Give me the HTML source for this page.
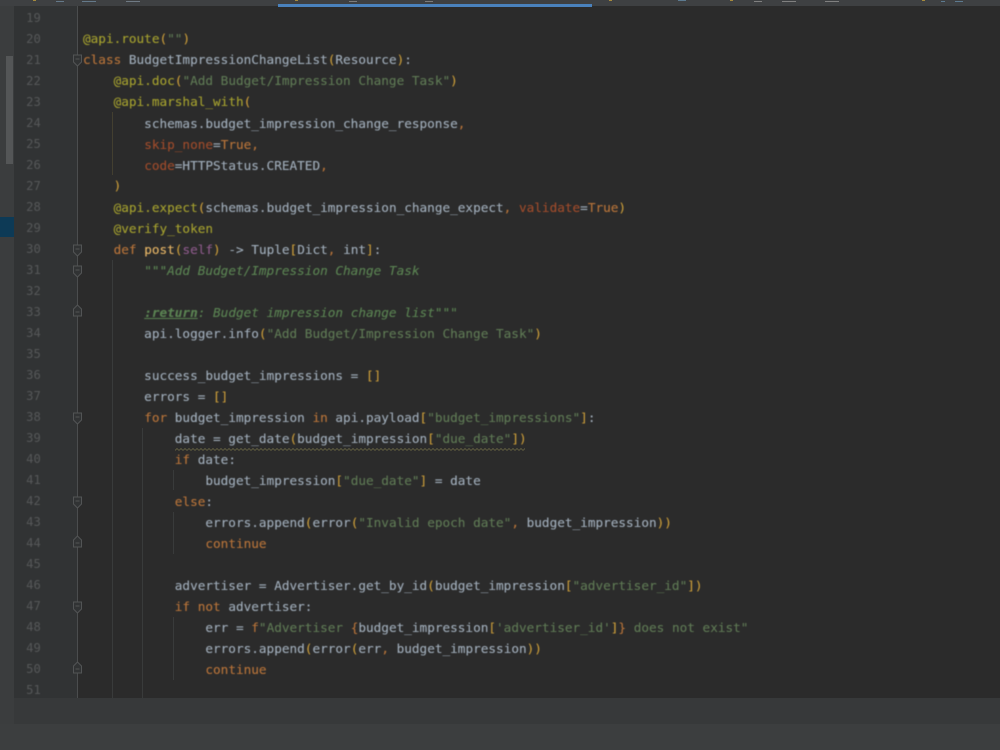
<!DOCTYPE html>
<html><head><meta charset="utf-8"><style>
html,body{margin:0;padding:0;width:1000px;height:750px;overflow:hidden;background:#2b2b2b}
div{position:absolute}
#code{left:0;top:0;width:1000px;height:750px;filter:blur(.45px)}
.l{white-space:pre;font:12.71px/21px "DejaVu Sans Mono","Liberation Mono",monospace;color:#a0adba;left:83px;height:21px;-webkit-text-stroke:.12px}
.u{margin-top:-1px}
.n{left:14px;width:39px;text-align:center;white-space:pre;font:12.2px/21px "DejaVu Sans Mono","Liberation Mono",monospace;color:#565859;height:21px}
.k{color:#b8743a}.s{color:#5f7a55}.d{color:#a5a12f}.b{color:#c99c3a}.p{color:#a04c2c}.c{color:#b8743a}.f{color:#e6b566}.m{color:#8c5a8a}.i{font-style:italic;color:#5b8453}
.g{background:#393b3b;width:1px}
svg{position:absolute}
</style></head><body>
<div style="left:0;top:0;width:14px;height:750px;background:#3b3d3e"></div>
<div style="left:6px;top:56px;width:7px;height:108px;background:#545657"></div>
<div style="left:0;top:217px;width:14px;height:20px;background:#0d3a56"></div>
<div style="left:14px;top:6px;width:64px;height:692px;background:#313334"></div>
<div style="left:0;top:0;width:1000px;height:6px;background:#3e4042"></div>
<div style="left:278px;top:4px;width:314px;height:3px;background:#4a82bd"></div>
<div style="left:14px;top:698px;width:986px;height:26px;background:#37393a"></div>
<div style="left:0;top:724px;width:1000px;height:26px;background:#3c3e3f"></div>
<div style="left:33px;top:0;height:1px;width:3px;background:#a58a3d"></div>
<div style="left:56px;top:1px;height:1px;width:8px;background:#64798a"></div>
<div style="left:82px;top:1px;height:1px;width:14px;background:#64798a"></div>
<div style="left:126px;top:1px;height:1px;width:14px;background:#6f7a84"></div>
<div style="left:295px;top:0;height:1px;width:3px;background:#a58a3d"></div>
<div style="left:349px;top:1px;height:1px;width:8px;background:#7c7c7c"></div>
<div style="left:425px;top:1px;height:1px;width:8px;background:#7c7c7c"></div>
<div style="left:609px;top:0;height:1px;width:3px;background:#a58a3d"></div>
<div style="left:678px;top:0;height:1px;width:8px;background:#5c7a90"></div>
<div style="left:730px;top:0;height:1px;width:3px;background:#a58a3d"></div>
<div style="left:754px;top:1px;height:1px;width:8px;background:#808080"></div>
<div style="left:782px;top:1px;height:1px;width:14px;background:#808080"></div>
<div style="left:825px;top:1px;height:1px;width:14px;background:#808080"></div>
<div style="left:922px;top:0;height:1px;width:3px;background:#a58a3d"></div>
<div style="left:941px;top:1px;height:1px;width:4px;background:#5c7a90"></div>
<div style="left:955px;top:1px;height:1px;width:8px;background:#5c7a90"></div>
<div class="g" style="left:77px;top:6px;height:692px;background:#4b4d4e"></div>
<div class="g" style="left:112px;top:112px;height:63px;background:#433f30"></div>
<div class="g" style="left:112px;top:260px;height:438px"></div>
<div class="g" style="left:142px;top:428px;height:270px"></div>
<div class="g" style="left:173px;top:470px;height:20px"></div>
<div class="g" style="left:173px;top:512px;height:42px"></div>
<div class="g" style="left:173px;top:617px;height:63px"></div>
<svg width="1000" height="750" style="left:0;top:0" fill="#313334" stroke="#525455" stroke-width="1">
<defs><pattern id="w" width="4" height="3" patternUnits="userSpaceOnUse" x="175" y="448"><path d="M0 2.5L2 .5L4 2.5" fill="none" stroke="#6f6b45" stroke-width=".7"/></pattern></defs>
<rect x="175" y="448" width="350" height="3" fill="url(#w)" stroke="none"/>
<path d="M73.5 55h8v7l-4 4l-4-4z"/><path d="M75.5 59h4"/>
<path d="M73.5 245h8v7l-4 4l-4-4z"/><path d="M75.5 249h4"/>
<path d="M73.5 266h8v7l-4 4l-4-4z"/><path d="M75.5 270h4"/>
<path d="M73.5 316h8v-7l-4-4l-4 4z"/><path d="M75.5 312h4"/>
<path d="M73.5 413h8v7l-4 4l-4-4z"/><path d="M75.5 417h4"/>
<path d="M73.5 497h8v7l-4 4l-4-4z"/><path d="M75.5 501h4"/>
<path d="M73.5 547h8v-7l-4-4l-4 4z"/><path d="M75.5 543h4"/>
<path d="M73.5 602h8v7l-4 4l-4-4z"/><path d="M75.5 606h4"/>
<path d="M73.5 673h8v-7l-4-4l-4 4z"/><path d="M75.5 669h4"/>
</svg>
<div id="code">
<div class="n" style="top:7.5px">19</div>
<div class="n" style="top:28.5px">20</div><div class="l u" style="top:28.5px"><span class="d">@api.route</span><span class="b">(</span><span class="s">""</span><span class="b">)</span></div>
<div class="n" style="top:49.5px">21</div><div class="l u" style="top:49.5px"><span class="k">class</span> BudgetImpressionChangeList<span class="b">(</span>Resource<span class="b">)</span>:</div>
<div class="n" style="top:70.5px">22</div><div class="l u" style="top:70.5px">    <span class="d">@api.doc</span><span class="b">(</span><span class="s">"Add Budget/Impression Change Task"</span><span class="b">)</span></div>
<div class="n" style="top:91.5px">23</div><div class="l u" style="top:91.5px">    <span class="d">@api.marshal_with</span><span class="b">(</span></div>
<div class="n" style="top:112.5px">24</div><div class="l" style="top:112.5px">        schemas.budget_impression_change_response<span class="c">,</span></div>
<div class="n" style="top:133.5px">25</div><div class="l" style="top:133.5px">        <span class="p">skip_none</span>=<span class="c">True,</span></div>
<div class="n" style="top:154.5px">26</div><div class="l" style="top:154.5px">        <span class="p">code</span>=HTTPStatus.CREATED<span class="c">,</span></div>
<div class="n" style="top:175.5px">27</div><div class="l u" style="top:175.5px">    <span class="b">)</span></div>
<div class="n" style="top:196.5px">28</div><div class="l" style="top:196.5px">    <span class="d">@api.expect</span><span class="b">(</span>schemas.budget_impression_change_expect<span class="c">,</span> <span class="p">validate</span>=<span class="c">True</span><span class="b">)</span></div>
<div class="n" style="top:217.5px">29</div><div class="l" style="top:217.5px">    <span class="d">@verify_token</span></div>
<div class="n" style="top:238.5px">30</div><div class="l" style="top:238.5px">    <span class="k">def</span> <span class="f">post</span><span class="b">(</span><span class="m">self</span><span class="b">)</span> -&gt; Tuple<span class="b">[</span>Dict<span class="c">,</span> int<span class="b">]</span>:</div>
<div class="n" style="top:259.5px">31</div><div class="l" style="top:259.5px">        <span class="i">"""Add Budget/Impression Change Task</span></div>
<div class="n" style="top:280.5px">32</div>
<div class="n" style="top:301.5px">33</div><div class="l" style="top:301.5px">        <span class="i"><b style="text-decoration:underline">:return</b>: Budget impression change list"""</span></div>
<div class="n" style="top:322.5px">34</div><div class="l" style="top:322.5px">        api.logger.info<span class="b">(</span><span class="s">"Add Budget/Impression Change Task"</span><span class="b">)</span></div>
<div class="n" style="top:343.5px">35</div>
<div class="n" style="top:364.5px">36</div><div class="l" style="top:364.5px">        success_budget_impressions = <span class="b">[]</span></div>
<div class="n" style="top:385.5px">37</div><div class="l" style="top:385.5px">        errors = <span class="b">[]</span></div>
<div class="n" style="top:406.5px">38</div><div class="l" style="top:406.5px">        <span class="k">for</span> budget_impression <span class="k">in</span> api.payload<span class="b">[</span><span class="s">"budget_impressions"</span><span class="b">]</span>:</div>
<div class="n" style="top:427.5px">39</div><div class="l" style="top:427.5px">            date = get_date<span class="b">(</span>budget_impression<span class="b">[</span><span class="s">"due_date"</span><span class="b">])</span></div>
<div class="n" style="top:448.5px">40</div><div class="l" style="top:448.5px">            <span class="k">if</span> date:</div>
<div class="n" style="top:469.5px">41</div><div class="l" style="top:469.5px">                budget_impression<span class="b">[</span><span class="s">"due_date"</span><span class="b">]</span> = date</div>
<div class="n" style="top:490.5px">42</div><div class="l" style="top:490.5px">            <span class="k">else</span>:</div>
<div class="n" style="top:511.5px">43</div><div class="l" style="top:511.5px">                errors.append<span class="b">(</span>error<span class="b">(</span><span class="s">"Invalid epoch date"</span><span class="c">,</span> budget_impression<span class="b">))</span></div>
<div class="n" style="top:532.5px">44</div><div class="l" style="top:532.5px">                <span class="k">continue</span></div>
<div class="n" style="top:553.5px">45</div>
<div class="n" style="top:574.5px">46</div><div class="l" style="top:574.5px">            advertiser = Advertiser.get_by_id<span class="b">(</span>budget_impression<span class="b">[</span><span class="s">"advertiser_id"</span><span class="b">])</span></div>
<div class="n" style="top:595.5px">47</div><div class="l" style="top:595.5px">            <span class="k">if not</span> advertiser:</div>
<div class="n" style="top:616.5px">48</div><div class="l" style="top:616.5px">                err = <span class="k">f</span><span class="s">"Advertiser </span><span class="c">{</span>budget_impression<span class="b">[</span><span class="s">'advertiser_id'</span><span class="b">]</span><span class="c">}</span><span class="s"> does not exist"</span></div>
<div class="n" style="top:637.5px">49</div><div class="l" style="top:637.5px">                errors.append<span class="b">(</span>error<span class="b">(</span>err<span class="c">,</span> budget_impression<span class="b">))</span></div>
<div class="n" style="top:658.5px">50</div><div class="l" style="top:658.5px">                <span class="k">continue</span></div>
<div class="n" style="top:679.5px">51</div>
</div>
</body></html>
